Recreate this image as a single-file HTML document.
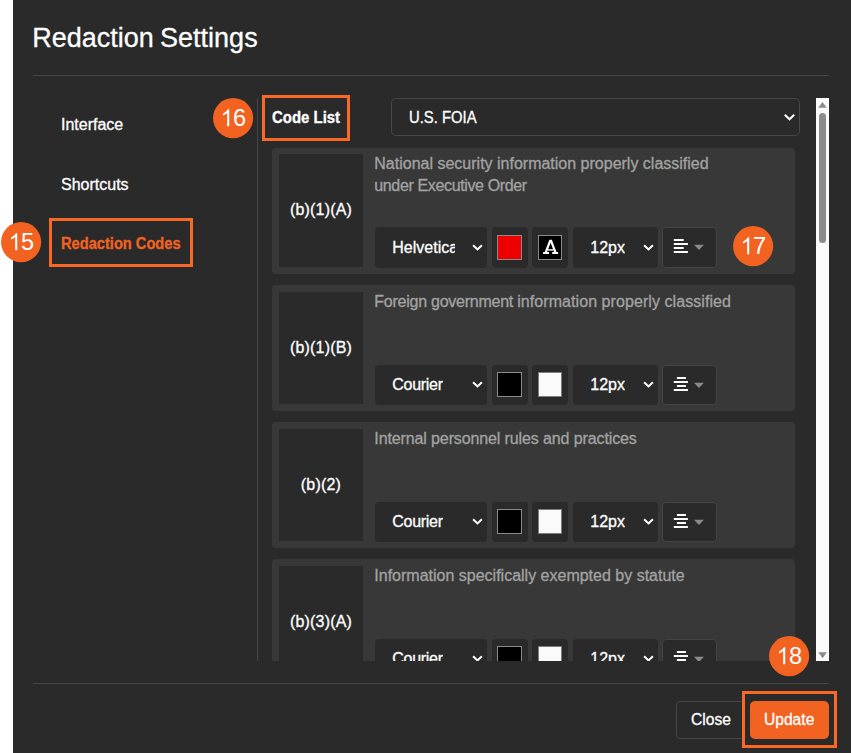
<!DOCTYPE html>
<html>
<head>
<meta charset="utf-8">
<title>Redaction Settings</title>
<style>
*{box-sizing:border-box;margin:0;padding:0}
html,body{width:851px;height:753px;overflow:hidden;background:#fff}
body{font-family:"Liberation Sans",sans-serif;color:#fff;position:relative;-webkit-text-stroke:0.3px}
.abs{position:absolute}
.panel{position:absolute;left:13px;top:0;width:838px;height:753px;background:#2a2a2a}
.t{position:absolute;white-space:nowrap;line-height:1;transform-origin:0 0}
.hr{position:absolute;left:33px;width:796px;height:1px;background:#454545}
.circle{position:absolute;width:40px;height:40px;border-radius:50%;background:#f26322;color:#fff;text-align:center;font-size:21px;line-height:40px}
.hl{position:absolute;border:3px solid #fa6825}
.card{position:absolute;left:272px;width:523px;height:126px;background:#383838;border-radius:4px}
.codebox{position:absolute;left:7px;top:7px;width:84px;height:112px;background:#2a2a2a}
.code{position:absolute;left:7px;width:84px;top:55.2px;letter-spacing:.2px;text-align:center;font-size:16px;line-height:1;white-space:nowrap}
.desc{position:absolute;left:102.3px;top:6px;font-size:16px;line-height:22.4px;color:#a3a3a3;white-space:nowrap}
.ctl{position:absolute;top:80px;height:40px;background:#2a2a2a;border-radius:4px}
.fsel{left:103px;width:112px}
.c1{left:220px;width:36px}
.c2{left:260px;width:36px}
.ssel{left:301px;width:85px}
.al{left:390px;width:55px;border:1px solid #444}
.sw{position:absolute;left:5px;top:7px;width:25px;height:25px;border:1px solid #8a8a8a}
.ctl .lbl{position:absolute;left:17.3px;top:11.5px;font-size:16px;line-height:1;white-space:nowrap;overflow:hidden}
.chev{position:absolute;top:16.3px;width:11px;height:7px}
.scroll{position:absolute;left:258px;top:98px;width:558px;height:563px;overflow:hidden}
.first .codebox{top:6px;height:113px}
.first .code{top:54.4px}
.first .desc{top:5px;line-height:22px}
.first .ctl{top:79px;height:41px}
.first .ctl>*{margin-top:1px}
</style>
</head>
<body>
<div class="panel"></div>

<div class="t" id="title" style="left:32.2px;top:25.4px;font-size:27px;word-spacing:-1.2px">Redaction Settings</div>
<div class="hr" style="top:75px"></div>

<!-- nav -->
<div class="t" id="nav1" style="left:61px;top:117px;font-size:16px">Interface</div>
<div class="t" id="nav2" style="left:61px;top:177px;font-size:16px">Shortcuts</div>
<div class="hl" style="left:49px;top:218px;width:144px;height:49px"></div>
<div class="t" id="nav3" style="left:61.2px;top:236px;font-size:16px;font-weight:bold;color:#f26322;transform:scaleX(0.915)">Redaction Codes</div>
<svg class="abs" style="left:0.9px;top:221.8px" width="41" height="41" viewBox="0 0 41 41"><circle cx="20.1" cy="20.1" r="20.1" fill="#f26322"/><path d="M763 0H583V1147Q518 1085 412.5 1023Q307 961 223 930V1104Q374 1175 487 1276Q600 1377 647 1472H763Z" fill="#fff" transform="translate(7.45,28.3) scale(0.011523,-0.011523)"/><text x="19.9" y="28.3" font-family="Liberation Sans, sans-serif" font-size="23.6" fill="#fff">5</text></svg>

<!-- divider -->
<div class="abs" style="left:257px;top:98px;width:1px;height:563px;background:#454545"></div>

<!-- code list header -->
<svg class="abs" style="left:213px;top:97.8px" width="41" height="41" viewBox="0 0 41 41"><circle cx="20.1" cy="20.1" r="20.1" fill="#f26322"/><path d="M763 0H583V1147Q518 1085 412.5 1023Q307 961 223 930V1104Q374 1175 487 1276Q600 1377 647 1472H763Z" fill="#fff" transform="translate(7.45,28.3) scale(0.011523,-0.011523)"/><text x="19.9" y="28.3" font-family="Liberation Sans, sans-serif" font-size="23.6" fill="#fff">6</text></svg>
<div class="hl" style="left:262px;top:95px;width:88px;height:46px"></div>
<div class="t" id="codelist" style="left:271.7px;top:110px;font-size:16px;font-weight:bold;transform:scaleX(0.934)">Code List</div>

<div class="abs" style="left:391px;top:98px;width:409px;height:38px;border:1px solid #474747;border-radius:5px"></div>
<div class="t" id="foia" style="left:409px;top:110px;font-size:16px;transform:scaleX(0.927)">U.S. FOIA</div>
<svg class="abs" style="left:783px;top:113px" width="13" height="9" viewBox="0 0 13 9"><path d="M1.8 1.8 L6.5 6.3 L11.2 1.8" fill="none" stroke="#fff" stroke-width="2"/></svg>

<!-- cards (clipped) -->
<div class="abs" style="left:0;top:98px;width:816px;height:563px;overflow:hidden">
<div class="abs" style="left:0;top:-98px;width:816px;height:760px">

<div class="card first" style="top:148px">
  <div class="codebox"></div><div class="code">(b)(1)(A)</div>
  <div class="desc">National security information properly classified<br><span style="letter-spacing:-.36px">under Executive Order</span></div>
  <div class="ctl fsel"><div class="lbl" style="width:63px">Helvetica</div><svg class="chev" style="left:96.8px" viewBox="0 0 11 7"><path d="M1.1 1.2 L5.5 5.4 L9.9 1.2" fill="none" stroke="#fff" stroke-width="2"/></svg></div>
  <div class="ctl c1"><div class="sw" style="background:#ee0000"></div></div>
  <div class="ctl c2"><div class="sw" style="background:#000;left:6px;width:24px"><svg class="abs" style="left:0;top:0" width="22" height="23" viewBox="0 0 22 23"><g fill="#fff"><path d="M5.5 16.4 L10.35 3.7 L12.85 3.7 L17.7 16.4 L15.3 16.4 L11.6 6.7 L7.9 16.4 Z"/><rect x="8.7" y="13.2" width="5.8" height="1.4"/><rect x="4.1" y="16" width="5.9" height="2"/><rect x="13.2" y="16" width="5.9" height="2"/></g></svg></div></div>
  <div class="ctl ssel"><div class="lbl">12px</div><svg class="chev" style="left:69.8px" viewBox="0 0 11 7"><path d="M1.1 1.2 L5.5 5.4 L9.9 1.2" fill="none" stroke="#fff" stroke-width="2"/></svg></div>
  <div class="ctl al"><svg class="abs" style="left:0;top:0" width="53" height="39" viewBox="0 0 53 39"><g fill="#fff"><rect x="10.8" y="10" width="9.9" height="2"/><rect x="10.8" y="14" width="14.1" height="2"/><rect x="10.8" y="18" width="9.9" height="2"/><rect x="10.8" y="22" width="14.1" height="2"/></g><path d="M31 15.7 L40.9 15.7 L35.95 21.1 Z" fill="#8a8a8a"/></svg></div>
</div>

<div class="card" style="top:285px">
  <div class="codebox"></div><div class="code">(b)(1)(B)</div>
  <div class="desc"><span style="letter-spacing:-.25px">Foreign government </span><span style="letter-spacing:.07px">information properly classified</span></div>
  <div class="ctl fsel"><div class="lbl" style="letter-spacing:-.3px">Courier</div><svg class="chev" style="left:96.8px" viewBox="0 0 11 7"><path d="M1.1 1.2 L5.5 5.4 L9.9 1.2" fill="none" stroke="#fff" stroke-width="2"/></svg></div>
  <div class="ctl c1"><div class="sw" style="background:#000"></div></div>
  <div class="ctl c2"><div class="sw" style="background:#fafafa;left:6px;width:24px;border-color:#7d7d7d"></div></div>
  <div class="ctl ssel"><div class="lbl">12px</div><svg class="chev" style="left:69.8px" viewBox="0 0 11 7"><path d="M1.1 1.2 L5.5 5.4 L9.9 1.2" fill="none" stroke="#fff" stroke-width="2"/></svg></div>
  <div class="ctl al"><svg class="abs" style="left:0;top:1px" width="53" height="39" viewBox="0 0 53 39"><g fill="#fff"><rect x="13.9" y="10" width="9" height="2"/><rect x="10.8" y="14" width="14.1" height="2"/><rect x="13.9" y="18" width="9" height="2"/><rect x="10.8" y="22" width="14.1" height="2"/></g><path d="M31 15.7 L40.9 15.7 L35.95 21.1 Z" fill="#8a8a8a"/></svg></div>
</div>

<div class="card" style="top:422px">
  <div class="codebox"></div><div class="code">(b)(2)</div>
  <div class="desc" style="letter-spacing:-.116px">Internal personnel rules and practices</div>
  <div class="ctl fsel"><div class="lbl" style="letter-spacing:-.3px">Courier</div><svg class="chev" style="left:96.8px" viewBox="0 0 11 7"><path d="M1.1 1.2 L5.5 5.4 L9.9 1.2" fill="none" stroke="#fff" stroke-width="2"/></svg></div>
  <div class="ctl c1"><div class="sw" style="background:#000"></div></div>
  <div class="ctl c2"><div class="sw" style="background:#fafafa;left:6px;width:24px;border-color:#7d7d7d"></div></div>
  <div class="ctl ssel"><div class="lbl">12px</div><svg class="chev" style="left:69.8px" viewBox="0 0 11 7"><path d="M1.1 1.2 L5.5 5.4 L9.9 1.2" fill="none" stroke="#fff" stroke-width="2"/></svg></div>
  <div class="ctl al"><svg class="abs" style="left:0;top:1px" width="53" height="39" viewBox="0 0 53 39"><g fill="#fff"><rect x="13.9" y="10" width="9" height="2"/><rect x="10.8" y="14" width="14.1" height="2"/><rect x="13.9" y="18" width="9" height="2"/><rect x="10.8" y="22" width="14.1" height="2"/></g><path d="M31 15.7 L40.9 15.7 L35.95 21.1 Z" fill="#8a8a8a"/></svg></div>
</div>

<div class="card" style="top:559px">
  <div class="codebox"></div><div class="code">(b)(3)(A)</div>
  <div class="desc">Information specifically exempted by statute</div>
  <div class="ctl fsel"><div class="lbl" style="letter-spacing:-.3px">Courier</div><svg class="chev" style="left:96.8px" viewBox="0 0 11 7"><path d="M1.1 1.2 L5.5 5.4 L9.9 1.2" fill="none" stroke="#fff" stroke-width="2"/></svg></div>
  <div class="ctl c1"><div class="sw" style="background:#000"></div></div>
  <div class="ctl c2"><div class="sw" style="background:#fafafa;left:6px;width:24px;border-color:#7d7d7d"></div></div>
  <div class="ctl ssel"><div class="lbl">12px</div><svg class="chev" style="left:69.8px" viewBox="0 0 11 7"><path d="M1.1 1.2 L5.5 5.4 L9.9 1.2" fill="none" stroke="#fff" stroke-width="2"/></svg></div>
  <div class="ctl al"><svg class="abs" style="left:0;top:1px" width="53" height="39" viewBox="0 0 53 39"><g fill="#fff"><rect x="13.9" y="10" width="9" height="2"/><rect x="10.8" y="14" width="14.1" height="2"/><rect x="13.9" y="18" width="9" height="2"/><rect x="10.8" y="22" width="14.1" height="2"/></g><path d="M31 15.7 L40.9 15.7 L35.95 21.1 Z" fill="#8a8a8a"/></svg></div>
</div>

</div>
</div>

<!-- scrollbar -->
<div class="abs" style="left:816px;top:98px;width:13px;height:563px;background:#fafafa"></div>
<svg class="abs" style="left:816px;top:98px" width="13" height="563" viewBox="0 0 13 563">
  <path d="M2.2 9.8 L10.8 9.8 L6.5 4 Z" fill="#8b8b8b"/>
  <rect x="3" y="15" width="7" height="130" rx="3.5" fill="#8b8b8b"/>
  <path d="M2.3 554.2 L10.9 554.2 L6.6 560.3 Z" fill="#8b8b8b"/>
</svg>

<svg class="abs" style="left:733px;top:225.9px" width="41" height="41" viewBox="0 0 41 41"><circle cx="20.1" cy="20.1" r="20.1" fill="#f26322"/><path d="M763 0H583V1147Q518 1085 412.5 1023Q307 961 223 930V1104Q374 1175 487 1276Q600 1377 647 1472H763Z" fill="#fff" transform="translate(7.45,28.3) scale(0.011523,-0.011523)"/><text x="19.9" y="28.3" font-family="Liberation Sans, sans-serif" font-size="23.6" fill="#fff">7</text></svg>

<!-- footer -->
<div class="hr" style="top:683px"></div>
<div class="abs" style="left:676.4px;top:701px;width:68.6px;height:37.6px;border:1px solid #474747;border-radius:4px"></div>
<div class="t" id="close" style="left:690.6px;top:711.7px;font-size:16px;transform:scaleX(0.975)">Close</div>
<div class="abs" style="left:750.2px;top:701px;width:78.9px;height:38.2px;background:#f26322;border-radius:5px"></div>
<div class="t" id="update" style="left:764px;top:711.7px;font-size:16px;transform:scaleX(0.975)">Update</div>
<div class="hl" style="left:742.3px;top:691px;width:94.7px;height:57.2px"></div>
<svg class="abs" style="left:769px;top:635.8px" width="41" height="41" viewBox="0 0 41 41"><circle cx="20.1" cy="20.1" r="20.1" fill="#f26322"/><path d="M763 0H583V1147Q518 1085 412.5 1023Q307 961 223 930V1104Q374 1175 487 1276Q600 1377 647 1472H763Z" fill="#fff" transform="translate(7.45,28.3) scale(0.011523,-0.011523)"/><text x="19.9" y="28.3" font-family="Liberation Sans, sans-serif" font-size="23.6" fill="#fff">8</text></svg>

</body>
</html>
